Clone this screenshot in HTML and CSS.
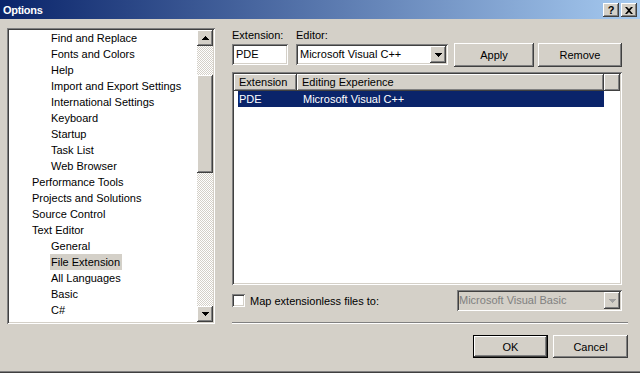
FILE: index.html
```html
<!DOCTYPE html>
<html lang="en">
<head>
  <meta charset="UTF-8" />
  <title>Options</title>
  <link rel="stylesheet" href="styles.css">
</head>
<body>

  <div class="window">
    <div class="titlebar">
      <span class="title">Options</span>
      <div class="caption-btns">
        <span class="cap-btn help">?</span>
        <span class="cap-btn">
          <svg width="8" height="7" viewBox="0 0 8 7"><path d="M0 0h2l2 2 2-2h2L5 3.5 8 7H6L4 5 2 7H0l3-3.5z" fill="#000"/></svg>
        </span>
      </div>
    </div>

    <div class="content">
      <!-- left tree -->
      <div class="tree">
        <ul class="tree-items">
          <li class="lvl2"><span>Find and Replace</span></li>
          <li class="lvl2"><span>Fonts and Colors</span></li>
          <li class="lvl2"><span>Help</span></li>
          <li class="lvl2"><span>Import and Export Settings</span></li>
          <li class="lvl2"><span>International Settings</span></li>
          <li class="lvl2"><span>Keyboard</span></li>
          <li class="lvl2"><span>Startup</span></li>
          <li class="lvl2"><span>Task List</span></li>
          <li class="lvl2"><span>Web Browser</span></li>
          <li class="lvl1"><span>Performance Tools</span></li>
          <li class="lvl1"><span>Projects and Solutions</span></li>
          <li class="lvl1"><span>Source Control</span></li>
          <li class="lvl1"><span>Text Editor</span></li>
          <li class="lvl2"><span>General</span></li>
          <li class="lvl2 current"><span>File Extension</span></li>
          <li class="lvl2"><span>All Languages</span></li>
          <li class="lvl2"><span>Basic</span></li>
          <li class="lvl2"><span>C#</span></li>
        </ul>
        <div class="vscroll">
          <div class="sb-btn">
            <svg width="7" height="4" viewBox="0 0 7 4"><path d="M3 0h1v1h1v1h1v1h1v1H0V3h1V2h1V1h1z" fill="#000"/></svg>
          </div>
          <div class="sb-track">
            <div class="sb-thumb"></div>
          </div>
          <div class="sb-btn">
            <svg width="7" height="4" viewBox="0 0 7 4"><path d="M0 0h7v1H6v1H5v1H4v1H3V3H2V2H1V1H0z" fill="#000"/></svg>
          </div>
        </div>
      </div>

      <!-- right panel -->
      <div class="panel">
        <div class="field-row">
          <div class="field ext-field">
            <span class="field-label">Extension:</span>
            <div class="textbox">PDE</div>
          </div>
          <div class="field editor-field">
            <span class="field-label">Editor:</span>
            <div class="combo">
              <span class="combo-text">Microsoft Visual C++</span>
              <span class="combo-btn">
                <svg width="7" height="4" viewBox="0 0 7 4"><path d="M0 0h7v1H6v1H5v1H4v1H3V3H2V2H1V1H0z" fill="#000"/></svg>
              </span>
            </div>
          </div>
          <button class="btn apply-btn">Apply</button>
          <button class="btn remove-btn">Remove</button>
        </div>

        <div class="listview">
          <div class="lv-header">
            <div class="lv-col col-ext">Extension</div>
            <div class="lv-col col-exp">Editing Experience</div>
            <div class="lv-col col-rest"></div>
          </div>
          <div class="lv-row selected">
            <span class="lv-cell cell-ext">PDE</span>
            <span class="lv-cell">Microsoft Visual C++</span>
          </div>
        </div>

        <div class="map-row">
          <label class="check-label">
            <span class="checkbox"></span>
            Map extensionless files to:
          </label>
          <div class="combo disabled">
            <span class="combo-text">Microsoft Visual Basic</span>
            <span class="combo-btn">
              <svg width="7" height="4" viewBox="0 0 7 4"><path d="M0 0h7v1H6v1H5v1H4v1H3V3H2V2H1V1H0z" fill="#a0a0a0"/></svg>
            </span>
          </div>
        </div>

        <div class="separator"></div>

        <div class="dialog-btns">
          <button class="btn default">OK</button>
          <button class="btn">Cancel</button>
        </div>
      </div>
    </div>
  </div>

</body>
</html>
```

FILE: styles.css
```css
body {
  margin: 0;
  font-family: 'Liberation Sans', Arial, sans-serif;
  font-size: 11px;
  color: #000;
  background-color: #d4d0c8;
}

.window {
  width: 640px;
  height: 373px;
  box-sizing: border-box;
  background-color: #d4d0c8;
  box-shadow: inset 0 -1px #404040, inset 0 -2px #808080;
  overflow: hidden;
}

/* Title bar */
.titlebar {
  height: 19px;
  display: flex;
  align-items: center;
  justify-content: space-between;
  padding: 0 3px 0 3px;
  background: linear-gradient(to right, #0a246a, #a6caf0);
}

.title {
  color: white;
  font-weight: bold;
  font-size: 11px;
  letter-spacing: -0.3px;
}

.caption-btns {
  display: flex;
  gap: 2px;
  padding-top: 1px;
}

.cap-btn {
  width: 16px;
  height: 14px;
  background-color: #d4d0c8;
  box-shadow: inset -1px -1px #404040, inset 1px 1px #fff, inset -2px -2px #808080;
  display: flex;
  justify-content: center;
  align-items: center;
  font-weight: bold;
  font-size: 11px;
}

.cap-btn.help {
  line-height: 14px;
}

/* Layout */
.content {
  display: grid;
  grid-template-columns: 208px 396px;
  column-gap: 17px;
  padding: 9px 0 0 7px;
  align-items: start;
}

/* Tree */
.tree {
  height: 296px;
  box-sizing: border-box;
  background: white;
  padding: 2px;
  box-shadow: inset 1px 1px #808080, inset -1px -1px #fff, inset 2px 2px #404040, inset -2px -2px #d4d0c8;
  display: flex;
}

.tree-items {
  list-style: none;
  margin: 0;
  padding: 0;
  flex-grow: 1;
  overflow: hidden;
}

.tree-items li {
  height: 16px;
  line-height: 16px;
  white-space: nowrap;
}

.tree-items span {
  padding: 0 2px 0 1px;
  display: inline-block;
}

.tree-items .lvl1 {
  padding-left: 22px;
}

.tree-items .lvl2 {
  padding-left: 41px;
}

.tree-items .current span {
  background-color: #d4d0c8;
}

.vscroll {
  width: 16px;
  display: flex;
  flex-direction: column;
}

.sb-btn {
  height: 16px;
  background-color: #d4d0c8;
  box-shadow: inset -1px -1px #404040, inset 1px 1px #fff, inset -2px -2px #808080;
  display: flex;
  justify-content: center;
  align-items: center;
}

.sb-track {
  flex-grow: 1;
  background: repeating-conic-gradient(#d4d0c8 0 25%, #fff 0 50%) 0 0 / 2px 2px;
  padding-top: 29px;
}

.sb-thumb {
  height: 98px;
  background-color: #d4d0c8;
  box-shadow: inset -1px -1px #404040, inset 1px 1px #fff, inset -2px -2px #808080;
}

/* Right panel */
.panel {
  display: flex;
  flex-direction: column;
}

.field-row {
  display: flex;
  align-items: flex-end;
  margin-right: 6px;
}

.field {
  display: flex;
  flex-direction: column;
}

.field-label {
  line-height: 14px;
  height: 14px;
  margin-bottom: 2px;
}

.ext-field {
  width: 56px;
  margin-right: 8px;
}

.editor-field {
  width: 152px;
  margin-right: 6px;
}

.textbox, .combo {
  height: 21px;
  box-sizing: border-box;
  background: white;
  box-shadow: inset 1px 1px #808080, inset -1px -1px #fff, inset 2px 2px #404040, inset -2px -2px #d4d0c8;
  line-height: 21px;
  padding-left: 4px;
  margin-bottom: 2px;
}

.combo {
  display: flex;
  justify-content: space-between;
  padding: 2px 2px 2px 4px;
  line-height: 17px;
}

.combo-btn {
  width: 16px;
  height: 17px;
  background-color: #d4d0c8;
  box-shadow: inset -1px -1px #404040, inset 1px 1px #fff, inset -2px -2px #808080;
  display: flex;
  justify-content: center;
  align-items: center;
}

.combo.disabled {
  background-color: #d4d0c8;
  color: #808080;
  width: 165px;
  padding-left: 2px;
  margin-bottom: 0;
}

.btn {
  font-family: 'Liberation Sans', Arial, sans-serif;
  font-size: 11px;
  color: #000;
  background-color: #d4d0c8;
  border: none;
  padding: 0;
  height: 24px;
  box-shadow: inset -1px -1px #404040, inset 1px 1px #fff, inset -2px -2px #808080;
}

.apply-btn {
  width: 80px;
  margin-right: 4px;
}

.remove-btn {
  width: 84px;
}

/* List view */
.listview {
  margin: 5px 6px 0 0;
  height: 213px;
  box-sizing: border-box;
  padding: 2px;
  background: white;
  box-shadow: inset 1px 1px #808080, inset -1px -1px #fff, inset 2px 2px #404040, inset -2px -2px #d4d0c8;
}

.lv-header {
  display: flex;
  height: 17px;
}

.lv-col {
  background-color: #d4d0c8;
  box-shadow: inset -1px -1px #404040, inset 1px 1px #fff, inset -2px -2px #808080;
  line-height: 17px;
  padding-left: 5px;
  box-sizing: border-box;
}

.col-ext {
  width: 63px;
}

.col-exp {
  width: 307px;
}

.col-rest {
  flex-grow: 1;
}

.lv-row {
  display: flex;
  height: 16px;
  line-height: 16px;
  margin-left: 4px;
  width: 366px;
}

.lv-row.selected {
  background-color: #0a246a;
  color: white;
}

.lv-cell {
  padding-left: 1px;
}

.cell-ext {
  width: 63px;
}

/* Map row */
.map-row {
  display: flex;
  justify-content: space-between;
  align-items: center;
  margin: 5px 6px 0 0;
  height: 21px;
}

.check-label {
  display: flex;
  align-items: center;
  gap: 5px;
}

.checkbox {
  width: 13px;
  height: 13px;
  box-sizing: border-box;
  background: white;
  box-shadow: inset 1px 1px #808080, inset -1px -1px #fff, inset 2px 2px #404040, inset -2px -2px #d4d0c8;
}

.separator {
  margin-top: 11px;
  border-top: 1px solid #808080;
  border-bottom: 1px solid #fff;
}

.dialog-btns {
  margin-top: 11px;
  display: flex;
  justify-content: flex-end;
  gap: 5px;
}

.dialog-btns .btn {
  width: 75px;
  height: 23px;
}

.btn.default {
  box-shadow: inset 0 0 0 1px #000, inset -2px -2px #404040, inset 2px 2px #fff, inset -3px -3px #808080;
}
```
